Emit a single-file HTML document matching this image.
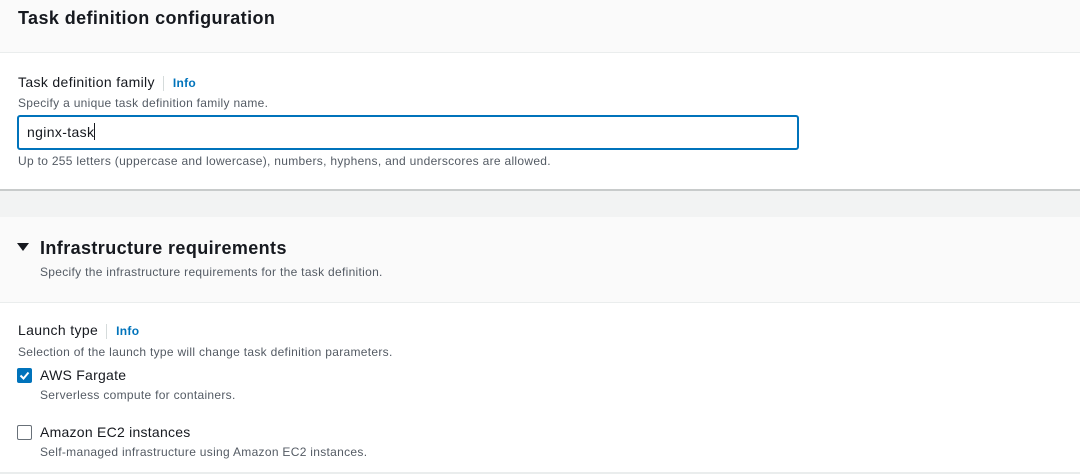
<!DOCTYPE html>
<html><head><style>
*{margin:0;padding:0;box-sizing:border-box}
body{width:1080px;height:474px;overflow:hidden;font-family:"Liberation Sans",sans-serif;color:#16191f;background:#fff;position:relative}
.a{position:absolute;white-space:nowrap}
.h{font-size:18px;font-weight:bold;letter-spacing:0.4px}
.l{font-size:14px;letter-spacing:0.35px}
.d{font-size:12px;color:#545b64;letter-spacing:0.3px}
.info{color:#0073bb;font-weight:bold;font-size:12px;letter-spacing:0.3px}
.sep{display:inline-block;width:1px;height:15px;background:#d5dbdb;vertical-align:middle;margin:0 9px 0 8px}
.cb{position:absolute;width:15px;height:15px;border-radius:2px}
</style></head><body>
<div class="a" style="left:0;top:0;width:1080px;height:53px;background:#fafafa;border-bottom:1px solid #eaeded"></div>
<div class="a h" style="left:18px;top:8px">Task definition configuration</div>
<div class="a l" style="left:18px;top:74px">Task definition family<span class="sep"></span><span class="info">Info</span></div>
<div class="a d" style="left:18px;top:96px">Specify a unique task definition family name.</div>
<div class="a" style="left:17px;top:115px;width:782px;height:35px;border:2px solid #0073bb;border-radius:3px"></div>
<div class="a l" style="left:27px;top:123px">nginx-task<span style="display:inline-block;width:1px;height:17px;background:#16191f;vertical-align:-3px"></span></div>
<div class="a d" style="left:18px;top:154px">Up to 255 letters (uppercase and lowercase), numbers, hyphens, and underscores are allowed.</div>
<div class="a" style="left:0;top:189px;width:1080px;height:28px;background:#f2f3f3;border-top:2px solid #c8cbcb"></div>
<div class="a" style="left:0;top:217px;width:1080px;height:86px;background:#fafafa;border-bottom:1px solid #eaeded"></div>
<div class="a" style="left:17px;top:243px;width:0;height:0;border-left:6px solid transparent;border-right:6px solid transparent;border-top:8px solid #16191f"></div>
<div class="a h" style="left:40px;top:238px">Infrastructure requirements</div>
<div class="a d" style="left:40px;top:265px">Specify the infrastructure requirements for the task definition.</div>
<div class="a l" style="left:18px;top:322px">Launch type<span class="sep"></span><span class="info">Info</span></div>
<div class="a d" style="left:18px;top:345px">Selection of the launch type will change task definition parameters.</div>
<div class="cb" style="left:17px;top:368px;background:#0073bb"><svg width="15" height="15" viewBox="0 0 15 15"><path d="M3.5 7.5l3 3 5-6" fill="none" stroke="#fff" stroke-width="2"/></svg></div>
<div class="a l" style="left:40px;top:367px;letter-spacing:0.25px">AWS Fargate</div>
<div class="a d" style="left:40px;top:388px">Serverless compute for containers.</div>
<div class="cb" style="left:17px;top:425px;border:1.5px solid #687078"></div>
<div class="a l" style="left:40px;top:424px;letter-spacing:0.25px">Amazon EC2 instances</div>
<div class="a d" style="left:40px;top:445px">Self-managed infrastructure using Amazon EC2 instances.</div>
<div class="a" style="left:0;top:472px;width:1080px;height:2px;background:#eaeded"></div>
</body></html>
